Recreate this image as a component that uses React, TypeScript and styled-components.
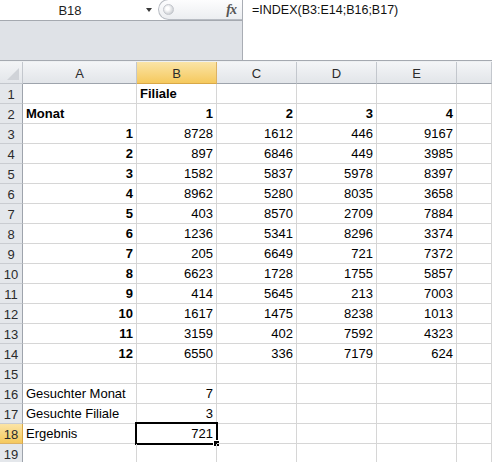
import styled, {createGlobalStyle, css} from 'styled-components';

const GlobalStyle = createGlobalStyle`
    html, body {
        margin: 0;
        padding: 0;
        background: #ffffff;
    }
    body {
        font-family: 'Liberation Sans', Arial, sans-serif;
    }
`;

const Sheet = styled.div`
    width: 492px;
    height: 462px;
    overflow: hidden;
    background: #ffffff;
    display: flex;
    flex-direction: column;
`;

const FormulaBar = styled.div`
    display: flex;
    height: 60px;
    border-bottom: 1px solid #a5a9b0;
    flex-shrink: 0;
`;

const LeftPane = styled.div`
    width: 242px;
    display: flex;
    flex-direction: column;
    border-right: 1px solid #a9adb4;
`;

const NameRow = styled.div`
    display: flex;
    align-items: stretch;
    height: 20px;
    border-bottom: 1px solid #a5a9b0;
    background: #ffffff;
`;

const NameBox = styled.div`
    width: 140px;
    display: flex;
    align-items: center;
    justify-content: center;
    font-size: 13px;
    color: #1e1e1e;
`;

const DropArrow = styled.div`
    width: 18px;
    display: flex;
    align-items: center;
    justify-content: center;

    &::after {
        content: '';
        border-left: 3px solid transparent;
        border-right: 3px solid transparent;
        border-top: 4px solid #3a3a3a;
    }
`;

const Splitter = styled.div`
    flex: 1;
    display: flex;
    align-items: center;
    justify-content: space-between;
    padding: 0 6px 0 4px;
    border: 1px solid #b8bcc3;
    border-right: none;
    border-radius: 11px 0 0 11px;
    background: linear-gradient(#fdfdfe, #eceef1);
    margin-top: -1px;
`;

const Knob = styled.div`
    width: 9px;
    height: 9px;
    border-radius: 50%;
    background: radial-gradient(circle at 40% 40%, #ffffff 20%, #c9ccd1 80%);
    border: 1px solid #c3c6cc;
`;

const Fx = styled.span`
    font-family: 'Liberation Serif', 'Times New Roman', serif;
    font-style: italic;
    font-weight: bold;
    font-size: 14px;
    color: #555555;
    letter-spacing: -1px;
`;

const GreyArea = styled.div`
    flex: 1;
    background: #dfe2e7;
`;

const FormulaText = styled.div`
    flex: 1;
    padding: 3px 0 0 9px;
    font-size: 12.5px;
    color: #111111;
`;

const Gap = styled.div`
    height: 1px;
    background: #eef0f2;
    flex-shrink: 0;
`;

const Grid = styled.div`
    display: grid;
    grid-template-columns: 23px 114px 80px 80px 80px 80px 35px;
    grid-auto-rows: 20px;
    grid-template-rows: 22px;
`;

const headerBase = css`
    display: flex;
    align-items: center;
    justify-content: center;
    font-size: 13px;
    color: #2b2b2b;
    box-sizing: border-box;
`;

const Corner = styled.div`
    ${headerBase};
    position: relative;
    background: linear-gradient(#f3f4f6, #e3e6ea);
    border-right: 1px solid #c3c7cd;
    border-bottom: 1px solid #c3c7cd;

    &::after {
        content: '';
        position: absolute;
        right: 3px;
        bottom: 3px;
        border-left: 12px solid transparent;
        border-bottom: 12px solid #d0d3d8;
    }
`;

const ColHead = styled.div<{$active?: boolean}>`
    ${headerBase};
    padding-top: 1px;
    background: ${({$active}) =>
        $active ? 'linear-gradient(#fbe4a6, #f5c95e)' : 'linear-gradient(#f4f5f7, #e2e5e9)'};
    border-right: 1px solid ${({$active}) => ($active ? '#dcb265' : '#c3c7cd')};
    border-bottom: 1px solid ${({$active}) => ($active ? '#d8a848' : '#9ea4ac')};
`;

const RowHead = styled.div<{$active?: boolean}>`
    ${headerBase};
    padding-top: 2px;
    background: ${({$active}) => ($active ? 'linear-gradient(#fbe4a6, #f5c95e)' : '#e4e7eb')};
    border-right: 1px solid ${({$active}) => ($active ? '#d8a848' : '#9ea4ac')};
    border-bottom: 1px solid ${({$active}) => ($active ? '#dcb265' : '#c9ccd1')};
`;

const Cell = styled.div<{$bold?: boolean; $right?: boolean}>`
    position: relative;
    display: flex;
    align-items: flex-end;
    justify-content: ${({$right}) => ($right ? 'flex-end' : 'flex-start')};
    padding: 0 3px 2px 3px;
    box-sizing: border-box;
    font-size: 13px;
    line-height: 15px;
    color: #000000;
    font-weight: ${({$bold}) => ($bold ? 'bold' : 'normal')};
    white-space: nowrap;
    border-right: 1px solid #d6d6d6;
    border-bottom: 1px solid #d6d6d6;
`;

const Selection = styled.div`
    position: absolute;
    left: -2px;
    top: -2px;
    right: -2px;
    bottom: -2px;
    border: 2px solid #000000;
    pointer-events: none;

    &::after {
        content: '';
        position: absolute;
        right: -4px;
        bottom: -4px;
        width: 5px;
        height: 5px;
        background: #000000;
        border: 1px solid #ffffff;
    }
`;

type CellValue = string | number | null;

interface RowData {
    cells: CellValue[];
    bold?: boolean[];
}

const data: Record<number, RowData> = {
    1: {cells: [null, 'Filiale', null, null, null], bold: [false, true]},
    2: {cells: ['Monat', 1, 2, 3, 4], bold: [true, true, true, true, true]},
    3: {cells: [1, 8728, 1612, 446, 9167]},
    4: {cells: [2, 897, 6846, 449, 3985]},
    5: {cells: [3, 1582, 5837, 5978, 8397]},
    6: {cells: [4, 8962, 5280, 8035, 3658]},
    7: {cells: [5, 403, 8570, 2709, 7884]},
    8: {cells: [6, 1236, 5341, 8296, 3374]},
    9: {cells: [7, 205, 6649, 721, 7372]},
    10: {cells: [8, 6623, 1728, 1755, 5857]},
    11: {cells: [9, 414, 5645, 213, 7003]},
    12: {cells: [10, 1617, 1475, 8238, 1013]},
    13: {cells: [11, 3159, 402, 7592, 4323]},
    14: {cells: [12, 6550, 336, 7179, 624]},
    16: {cells: ['Gesuchter Monat', 7]},
    17: {cells: ['Gesuchte Filiale', 3]},
    18: {cells: ['Ergebnis', 721]},
};

const columns = ['A', 'B', 'C', 'D', 'E', ''];
const rows = Array.from({length: 19}, (_, i) => i + 1);

export default function App() {
    return (
        <>
            <GlobalStyle />
            <Sheet>
                <FormulaBar>
                    <LeftPane>
                        <NameRow>
                            <NameBox>B18</NameBox>
                            <DropArrow />
                            <Splitter>
                                <Knob />
                                <Fx>fx</Fx>
                            </Splitter>
                        </NameRow>
                        <GreyArea />
                    </LeftPane>
                    <FormulaText>=INDEX(B3:E14;B16;B17)</FormulaText>
                </FormulaBar>
                <Gap />
                <Grid>
                    <Corner />
                    {columns.map((c, i) => (
                        <ColHead key={i} $active={c === 'B'}>
                            {c}
                        </ColHead>
                    ))}
                    {rows.map((r) => {
                        const row = data[r];
                        return [
                            <RowHead key={`h${r}`} $active={r === 18}>
                                {r}
                            </RowHead>,
                            ...columns.map((_, ci) => {
                                const v = row?.cells[ci] ?? null;
                                const bold =
                                    row?.bold?.[ci] ?? (ci === 0 && r >= 3 && r <= 14);
                                return (
                                    <Cell
                                        key={`${r}-${ci}`}
                                        $bold={bold}
                                        $right={typeof v === 'number'}
                                    >
                                        {v}
                                        {r === 18 && ci === 1 && <Selection />}
                                    </Cell>
                                );
                            }),
                        ];
                    })}
                </Grid>
            </Sheet>
        </>
    );
}
